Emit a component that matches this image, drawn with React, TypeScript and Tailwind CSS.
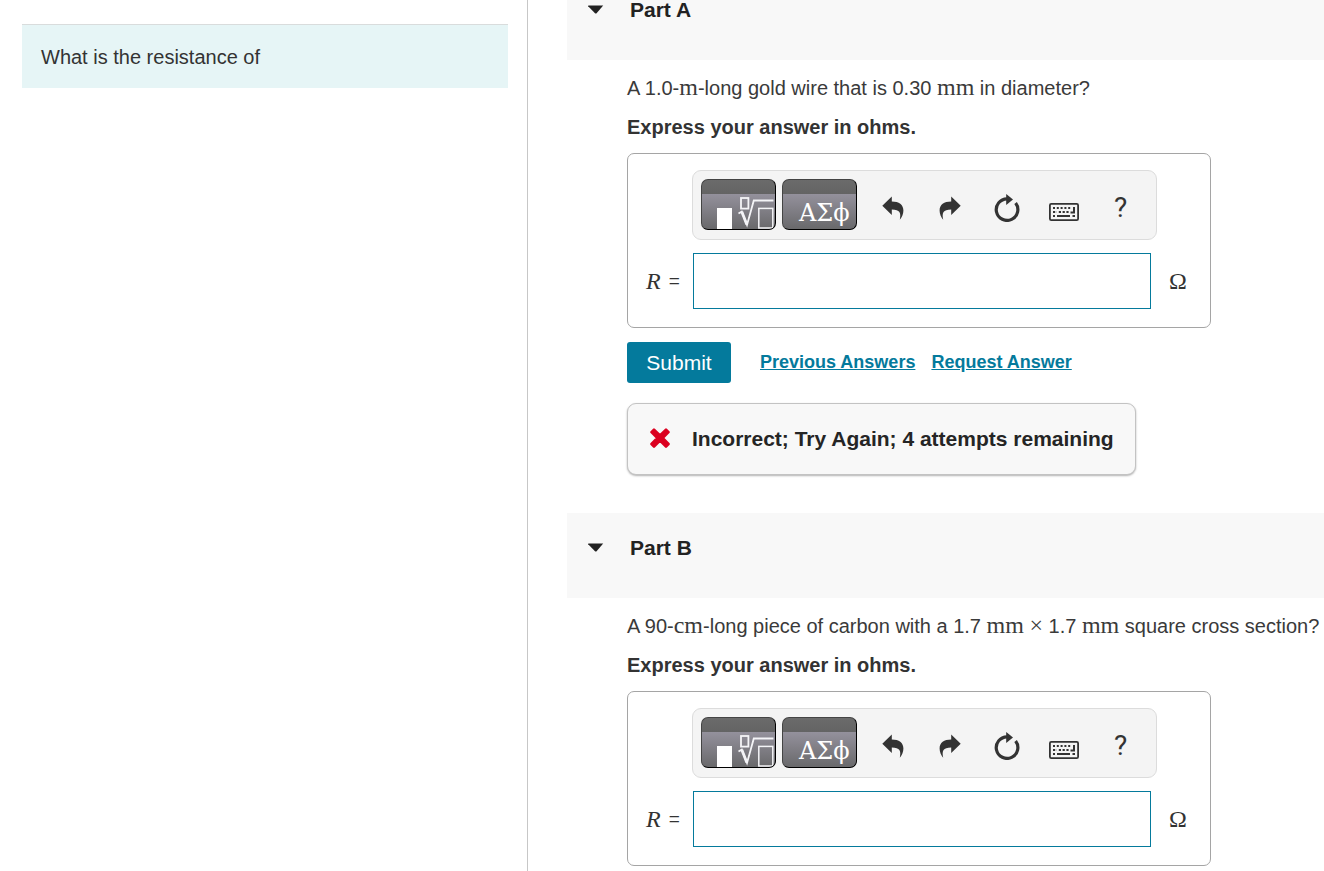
import type { ReactNode } from "react";

function Unit({ children }: { children: ReactNode }) {
  return <span className="font-['Liberation_Serif',serif] text-[24px] leading-[0]">{children}</span>;
}

function UndoIcon({ flipped = false }: { flipped?: boolean }) {
  return (
    <svg width="22" height="24" viewBox="0 0 22 24" fill="#333" aria-hidden="true">
      <path
        transform={flipped ? "translate(22 0) scale(-1 1)" : undefined}
        d="M0.3 9.8 9.8 0.5V5.6C17 5.6 21.4 8.8 21.4 14.6C21.4 18.2 20 21.2 17.8 23.8C19.2 17 18 13.6 9.8 13.6V19Z"
      />
    </svg>
  );
}

function ResetIcon() {
  return (
    <svg width="26" height="28" viewBox="0 0 26 28" aria-hidden="true">
      <path d="M13 4.8A10.8 10.8 0 1 0 21.6 9" fill="none" stroke="#333" strokeWidth="3.2" />
      <path d="M12.2 0 19 5.4 12.2 11Z" fill="#333" />
    </svg>
  );
}

function KeyboardIcon() {
  return (
    <svg width="30" height="18" viewBox="0 0 30 18" aria-hidden="true">
      <rect x="0.9" y="0.9" width="28.2" height="16.2" rx="1.4" fill="none" stroke="#333" strokeWidth="1.8" />
      <path d="M4 5H22.5" stroke="#333" strokeWidth="2" strokeDasharray="2 1.8" />
      <path d="M4 9H8M9.8 9H21" stroke="#333" strokeWidth="2" strokeDasharray="2.2 1.6" />
      <path d="M25 4V9.5H21.5" fill="none" stroke="#333" strokeWidth="2" />
      <path d="M4 13H6M8 13H21M23.5 13H26" stroke="#333" strokeWidth="2" />
    </svg>
  );
}

function TemplateIcon() {
  return (
    <svg width="73" height="49" viewBox="0 0 73 49" aria-hidden="true">
      <rect x="15" y="28" width="15" height="21" fill="#fff" />
      <g fill="none" stroke="#f4f4f7">
        <rect x="39" y="18" width="7.4" height="10.6" strokeWidth="1.8" />
        <path d="M36.5 33.5 39.8 31.6 45 45 51.8 20.5H71.5" strokeWidth="1.8" />
        <path d="M39.8 31.8 44.8 44.6" strokeWidth="2.8" />
        <rect x="56.8" y="28.4" width="14" height="19.6" strokeWidth="1.5" />
      </g>
    </svg>
  );
}

function Palette({ label, children }: { label: string; children: ReactNode }) {
  return (
    <button
      type="button"
      aria-label={label}
      className="flex h-[51px] w-[75px] overflow-hidden rounded-[7px] border border-t-[#444] border-r-black border-b-black border-l-[#444] bg-[linear-gradient(to_bottom,#6b6b6b_0,#646464_14px,#94919c_14px,#69696b_100%)]"
    >
      {children}
    </button>
  );
}

function Tool({ label, children }: { label: string; children: ReactNode }) {
  return (
    <button type="button" aria-label={label} className="flex h-12 w-[57px] items-center justify-center">
      {children}
    </button>
  );
}

function AnswerBox({ id }: { id: string }) {
  return (
    <div className="mt-[14px] w-[584px] rounded-[7px] border border-[#a5a5a5] pt-4 pb-[18px]">
      <div className="mr-[53px] ml-16 flex h-[70px] items-start rounded-[9px] border border-[#dcdcdc] bg-[#f4f4f4] px-2 pt-2">
        <div className="flex gap-[6px]">
          <Palette label="Templates">
            <TemplateIcon />
          </Palette>
          <Palette label="Symbols">
            <span className="pt-[15px] pl-4 font-['DejaVu_Serif',serif] text-[24px] leading-9 text-white">ΑΣϕ</span>
          </Palette>
        </div>
        <div className="ml-[7px] flex pt-[5px]">
          <Tool label="Undo">
            <UndoIcon />
          </Tool>
          <Tool label="Redo">
            <UndoIcon flipped />
          </Tool>
          <Tool label="Reset">
            <ResetIcon />
          </Tool>
          <Tool label="Keyboard shortcuts">
            <span className="pt-2">
              <KeyboardIcon />
            </span>
          </Tool>
          <Tool label="Help">
            <span className="font-[Roboto,sans-serif] text-[28px] leading-8 text-[#333]">?</span>
          </Tool>
        </div>
      </div>
      <div className="mt-[13px] flex items-center pl-[18px]">
        <label htmlFor={id} className="flex w-[47px] items-center gap-2 text-[19px] text-[#333]">
          <i className="font-['Liberation_Serif',serif] text-[24px] leading-7">R</i>
          <span className="leading-7">=</span>
        </label>
        <input id={id} type="text" className="h-14 min-w-0 flex-1 border border-[#047a9c] bg-white px-3 text-[20px] outline-none" />
        <span className="w-[59px] pl-[18px] font-['Liberation_Serif',serif] text-[24px] leading-7 text-[#333]">Ω</span>
      </div>
    </div>
  );
}

function Part({ title, id, question, children }: { title: string; id: string; question: ReactNode; children?: ReactNode }) {
  return (
    <section>
      <button type="button" className="flex h-[85px] w-full items-start bg-[#f8f8f8] pt-[25px] pl-5 text-left">
        <svg width="18" height="20" viewBox="0 2 18 20" fill="#222" aria-hidden="true">
          <path d="M1.6 7.5H16.2L9.6 15.2Q8.8 16 8 15.2L1.2 8.2Q.9 7.5 1.6 7.5Z" />
        </svg>
        <span className="ml-[25px] text-[21px] leading-5 font-bold text-[#222]">{title}</span>
      </button>
      <div className="pt-4 pl-[60px]">
        <p className="text-[20px] leading-6 whitespace-nowrap text-[#3a3a3a]">{question}</p>
        <p className="mt-[15px] text-[20px] leading-6 font-bold text-[#333]">Express your answer in ohms.</p>
        <AnswerBox id={id} />
        {children}
      </div>
    </section>
  );
}

export default function App() {
  return (
    <div className="flex h-screen overflow-hidden bg-white font-['Liberation_Sans',Arial,sans-serif]">
      <aside className="w-[528px] shrink-0 border-r border-[#c7c7c7] pt-6 pr-[19px] pl-[22px]">
        <div className="border-t border-[#d9dcdc] bg-[#e6f5f6] pt-[21px] pb-[19px] pl-[19px] text-[20px] leading-[23px] text-[#333]">
          What is the resistance of
        </div>
      </aside>
      <main className="-mt-[25px] min-w-0 flex-1 pl-[39px]">
        <Part
          title="Part A"
          id="answer-a"
          question={
            <>
              A 1.0-<Unit>m</Unit>-long gold wire that is 0.30 <Unit>mm</Unit> in diameter?
            </>
          }
        >
          <div className="mt-[14px] flex items-center text-[18px] font-bold text-[#047a9c]">
            <button type="button" className="h-[41px] w-[104px] rounded-[3px] bg-[#047a9c] text-[21px] font-normal text-white">
              Submit
            </button>
            <a href="#previous" className="ml-[29px] underline">
              Previous Answers
            </a>
            <a href="#request" className="ml-4 underline">
              Request Answer
            </a>
          </div>
          <div className="mt-5 mb-[38px] flex h-[72px] w-[509px] items-center rounded-[9px] border border-[#c3c3c3] bg-[#f8f8f8] pl-[21px] shadow-[0_1px_2px_rgba(0,0,0,0.3)]">
            <svg width="22" height="22" viewBox="0 0 22 22" aria-hidden="true">
              <path
                d="M5 2.6 11 8.5 17 2.6 19.5 5.1 13.6 11 19.5 17 17 19.5 11 13.6 5 19.5 2.5 17 8.4 11 2.5 5.1Z"
                transform="translate(0 -1)"
                fill="#db0020"
                stroke="#db0020"
                strokeWidth="2.6"
                strokeLinejoin="round"
              />
            </svg>
            <span className="ml-[21px] text-[21px] leading-6 font-bold text-[#252525]">
              Incorrect; Try Again; 4 attempts remaining
            </span>
          </div>
        </Part>
        <Part
          title="Part B"
          id="answer-b"
          question={
            <>
              A 90-<Unit>cm</Unit>-long piece of carbon with a 1.7 <Unit>mm</Unit> <Unit>×</Unit> 1.7 <Unit>mm</Unit> square
              cross section?
            </>
          }
        />
      </main>
    </div>
  );
}
